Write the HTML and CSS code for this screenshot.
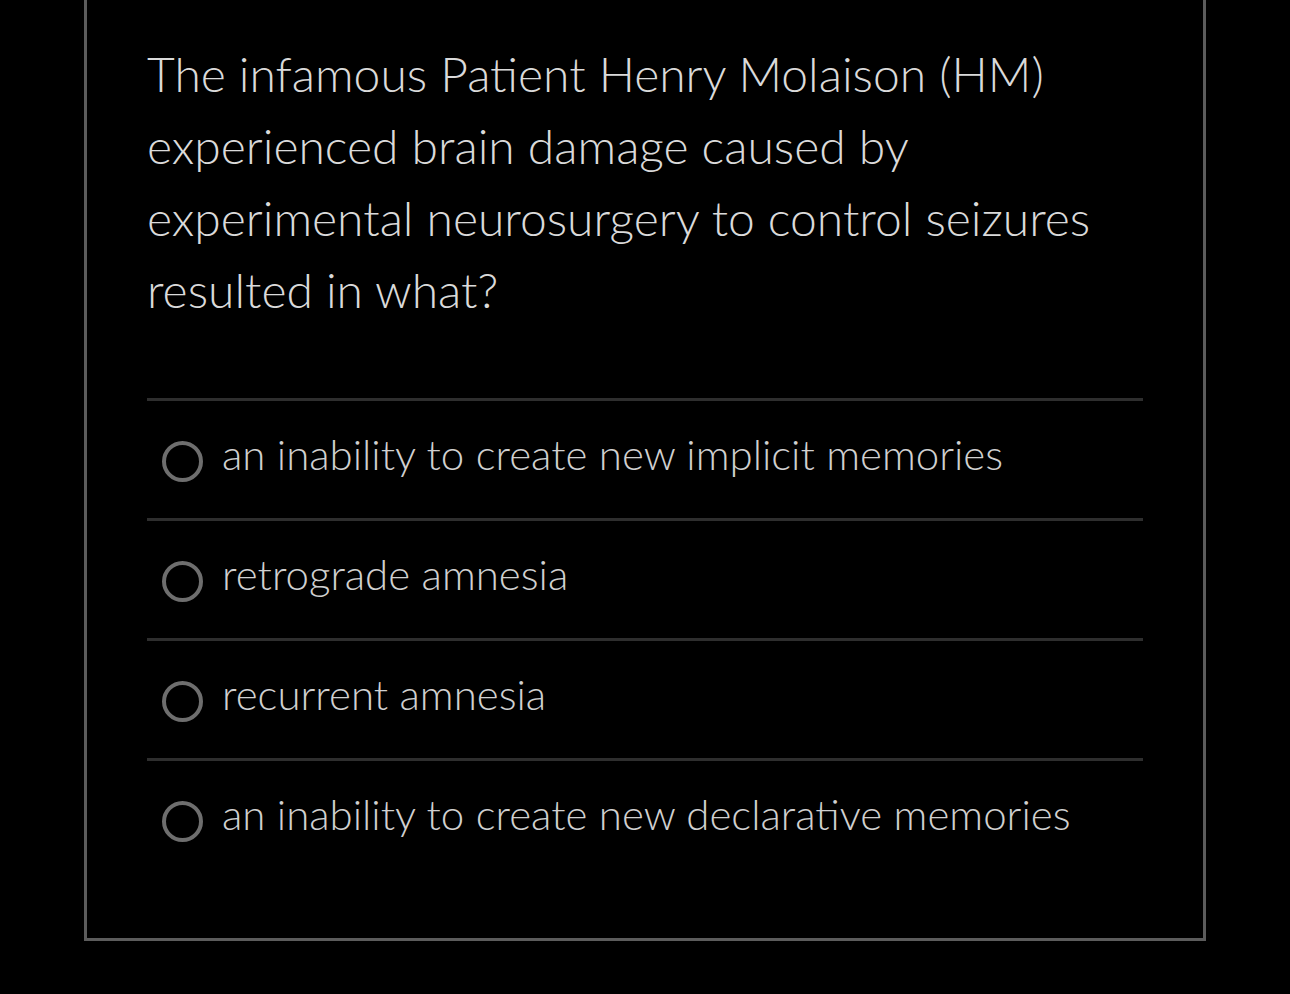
FILE: index.html
```html
<!DOCTYPE html>
<html lang="en">
<head>
<meta charset="utf-8">
<title>Question</title>
<link rel="stylesheet" href="styles.css">
</head>
<body>
<div class="card">
  <p class="question">The infamous Patient Henry Molaison (HM) experienced brain damage caused by experimental neurosurgery to control seizures resulted in what?</p>
  <ul class="options">
    <li class="option"><span class="radio"></span><span class="label">an inability to create new implicit memories</span></li>
    <li class="option"><span class="radio"></span><span class="label">retrograde amnesia</span></li>
    <li class="option"><span class="radio"></span><span class="label">recurrent amnesia</span></li>
    <li class="option"><span class="radio"></span><span class="label">an inability to create new declarative memories</span></li>
  </ul>
</div>
</body>
</html>
```
FILE: styles.css
```css
html, body {
  margin: 0;
  padding: 0;
  background: #000;
}
body {
  font-family: Lato, "Noto Sans", sans-serif;
  font-weight: 300;
  color: #dcdcdc;
}
.card {
  margin-left: 84px;
  width: 1122px;
  box-sizing: border-box;
  border: 3px solid #5c5c5c;
  border-top: none;
  padding: 38px 60px 60px 60px;
}
.question {
  margin: 0;
  font-size: 48px;
  line-height: 72px;
  color: #dadada;
}
.options {
  list-style: none;
  margin: 72px 0 0 0;
  padding: 0;
}
.option {
  display: flex;
  align-items: center;
  height: 117px;
  border-top: 3px solid #2e2e2e;
}
.radio {
  flex: none;
  width: 33px;
  height: 33px;
  border: 4px solid #6e6e6e;
  border-radius: 50%;
  margin-left: 15px;
  margin-right: 19px;
  margin-top: 4px;
}
.label {
  font-size: 42px;
  line-height: 48px;
  margin-bottom: 12px;
  color: #d0d0d0;
}
```
